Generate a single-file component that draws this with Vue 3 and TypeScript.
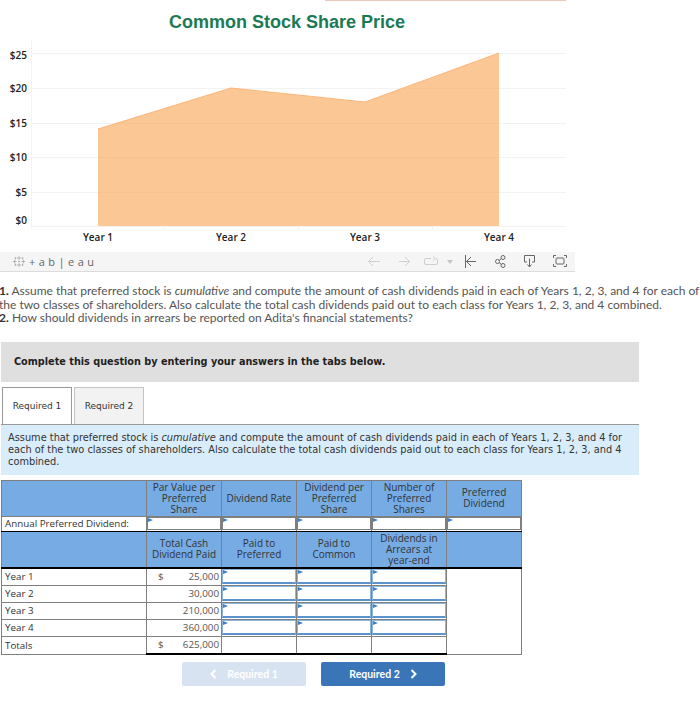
<script setup lang="ts">
const grid = [25, 20, 15, 10, 5, 0].map((v, i) => ({
  label: `$${v}`,
  y: [53, 88, 123, 157, 192, 226][i],
  labelY: [59, 92, 127, 161, 196, 224][i],
}))
const years = [
  { label: 'Year 1', x: 98 },
  { label: 'Year 2', x: 231 },
  { label: 'Year 3', x: 365 },
  { label: 'Year 4', x: 499 },
]
const rows = [
  { label: 'Year 1', sign: '$', amount: '25,000' },
  { label: 'Year 2', sign: '', amount: '30,000' },
  { label: 'Year 3', sign: '', amount: '210,000' },
  { label: 'Year 4', sign: '', amount: '360,000' },
]
</script>

<template>
  <div class="page">
    <div class="topline"></div>
    <h1 class="title">Common Stock Share Price</h1>

    <svg class="chart" width="566" height="206" viewBox="0 40 566 206">
      <line x1="31.5" y1="40" x2="31.5" y2="229" stroke="#f3f3f3" />
      <line v-for="g in grid" :key="g.y" x1="31" :y1="g.y + 0.5" x2="566" :y2="g.y + 0.5" stroke="#f3f3f3" />
      <line x1="164.5" y1="226" x2="164.5" y2="229" stroke="#f0f0f0" />
      <line x1="298.5" y1="226" x2="298.5" y2="229" stroke="#f0f0f0" />
      <line x1="432.5" y1="226" x2="432.5" y2="229" stroke="#f0f0f0" />
      <polygon points="98,129 231,88 365,102 499,53 499,226 98,226" fill="#f9a24e" fill-opacity="0.6" />
      <polyline points="98,129 231,88 365,102 499,53" fill="none" stroke="#fbb67a" stroke-width="1" />
      <text v-for="g in grid" :key="g.label" x="27" :y="g.labelY" text-anchor="end" class="tick">{{ g.label }}</text>
      <text v-for="y in years" :key="y.label" :x="y.x" y="241" text-anchor="middle" class="tick">{{ y.label }}</text>
    </svg>

    <div class="toolbar">
      <div class="brand">
        <svg width="14" height="13" viewBox="0 0 16 14" fill="none" stroke="#aaa" stroke-width="1">
          <path d="M8 1v4M6 3h4M8 9v4M6 11h4M3 5v4M1 7h4M13 5v4M11 7h4M4 2v2.500M3 3h2M12 2v2.500M11 3h2M4 9.500V12M3 11h2M12 9.500V12M11 11h2M8 6v2M7 7h2" />
        </svg>
        <span class="brand-text">+ a b | e a u</span>
      </div>
      <svg class="tools" width="210" height="19" viewBox="360 252 210 19" fill="none" stroke-width="1">
        <g stroke="#cfcfcf">
          <path d="M380 261.500h-11M373 257l-4.500 4.500 4.500 4.500" />
          <path d="M399 261.500h10M405 257l4.500 4.500-4.500 4.500" />
          <path d="M431 258.500h-5a1.500 1.500 0 0 0-1.500 1.500v3a1.500 1.500 0 0 0 1.500 1.500h10a1.500 1.500 0 0 0 1.500-1.500v-3a1.500 1.500 0 0 0-1.500-1.500M433 256.500l2.500 2-2.500 2" />
        </g>
        <path d="M447 260h6l-3 4z" fill="#c4c4c4" />
        <g stroke="#666">
          <path d="M465.500 255v13M476 261.500h-9.500M471 257l-4.500 4.500 4.500 4.500" />
          <circle cx="497.500" cy="261.500" r="2" />
          <circle cx="503" cy="257.500" r="2" />
          <circle cx="503" cy="265.500" r="2" />
          <path d="M499.200 260.300l2.200-1.600M499.200 262.700l2.200 1.600" />
          <path d="M527 262h-2.500v-6.500h10v6.500H532M529.500 258.500v8M527.500 264.500l2 2.500 2-2.500" />
          <path d="M553.500 258v-2.500h2.500M564 255.500h2.500v2.500M566.500 264v2.500H564M556 266.500h-2.500V264" />
          <rect x="556" y="258" width="8" height="6" rx="1" />
        </g>
      </svg>
    </div>

    <div class="question">
      <p><b>1.</b> Assume that preferred stock is <i>cumulative</i> and compute the amount of cash dividends paid in each of Years 1, 2, 3, and 4 for each of<br />the two classes of shareholders. Also calculate the total cash dividends paid out to each class for Years 1, 2, 3, and 4 combined.</p>
      <p><b>2.</b> How should dividends in arrears be reported on Adita's financial statements?</p>
    </div>

    <div class="notice">Complete this question by entering your answers in the tabs below.</div>

    <div class="tabs">
      <div class="tab active">Required 1</div>
      <div class="tab">Required 2</div>
    </div>

    <div class="prompt">
      Assume that preferred stock is <i>cumulative</i> and compute the amount of cash dividends paid in each of Years 1, 2, 3, and 4 for each of the two classes of shareholders. Also calculate the total cash dividends paid out to each class for Years 1, 2, 3, and 4 combined.
    </div>

    <table class="sheet">
      <colgroup>
        <col class="c0" /><col class="cn" /><col class="cn" /><col class="cn" /><col class="cn" /><col class="cn" />
      </colgroup>
      <tbody>
        <tr class="head first">
          <th></th>
          <th>Par Value per Preferred Share</th>
          <th>Dividend Rate</th>
          <th>Dividend per Preferred Share</th>
          <th>Number of Preferred Shares</th>
          <th>Preferred Dividend</th>
        </tr>
        <tr class="annual">
          <td class="label">Annual Preferred Dividend:</td>
          <td v-for="n in 5" :key="n" class="entry"><input type="text" aria-label="entry" /></td>
        </tr>
        <tr class="head second">
          <th></th>
          <th>Total Cash Dividend Paid</th>
          <th>Paid to Preferred</th>
          <th>Paid to Common</th>
          <th>Dividends in Arrears at year-end</th>
          <th></th>
        </tr>
        <tr v-for="(r, i) in rows" :key="r.label" class="year">
          <td class="label">{{ r.label }}</td>
          <td class="amount"><div><span>{{ r.sign }}</span><span>{{ r.amount }}</span></div></td>
          <td v-for="n in 3" :key="n" class="entry blue"><input type="text" aria-label="entry" /></td>
          <td v-if="i === 0" rowspan="5" class="blank"></td>
        </tr>
        <tr class="year totals">
          <td class="label">Totals</td>
          <td class="amount"><div><span>$</span><span>625,000</span></div></td>
          <td></td>
          <td></td>
          <td></td>
        </tr>
      </tbody>
    </table>

    <div class="nav">
      <button class="btn off" type="button">
        <svg width="7" height="10" viewBox="0 0 7 10" fill="none" stroke="#fff" stroke-width="2"><path d="M5.500 1L1.500 5l4 4" /></svg>
        <span>Required 1</span>
      </button>
      <button class="btn on" type="button">
        <span>Required 2</span>
        <svg width="7" height="10" viewBox="0 0 7 10" fill="none" stroke="#fff" stroke-width="2"><path d="M1.500 1l4 4-4 4" /></svg>
      </button>
    </div>
  </div>
</template>

<style scoped>
.page {
  width: 700px;
  height: 718px;
  overflow: hidden;
  background: #fff;
  font-family: "Lato", "Liberation Sans", sans-serif;
}
.topline {
  width: 241px;
  height: 1px;
  margin-left: 325px;
  background: #e9c9bd;
}
.title {
  margin: 0;
  width: 574px;
  height: 39px;
  padding-top: 11px;
  box-sizing: border-box;
  text-align: center;
  font: bold 18px/21px "Liberation Sans", sans-serif;
  color: #1a7a55;
}
.chart {
  display: block;
  margin-bottom: 6px;
}
.tick {
  font: 600 10px "Open Sans", sans-serif;
  fill: #222;
}
.toolbar {
  display: flex;
  align-items: center;
  justify-content: space-between;
  width: 575px;
  height: 20px;
  box-sizing: border-box;
  padding: 0 5px 0 12px;
  background: #f5f5f5;
  border-bottom: 1px solid #dcdcdc;
}
.brand {
  display: flex;
  align-items: center;
  gap: 3px;
}
.brand-text {
  font: 11px "Open Sans", sans-serif;
  letter-spacing: 0.300px;
  color: #666;
}
.tools {
  display: block;
}
.question {
  margin: 12px 0 0 -1px;
  width: 720px;
  font-size: 12px;
  line-height: 13.500px;
  color: #555;
}
.question p {
  margin: 0;
}
.question b {
  color: #333;
}
.notice {
  margin: 17px 0 0 1px;
  width: 638px;
  height: 40px;
  box-sizing: border-box;
  padding: 0 13px;
  display: flex;
  align-items: center;
  background: #dfdfdf;
  font: bold 9.700px "DejaVu Sans", sans-serif;
  color: #222;
}
.tabs {
  display: flex;
  gap: 2px;
  margin: 5px 0 0 2px;
  height: 37px;
}
.tab {
  width: 70px;
  box-sizing: border-box;
  border: 1px solid #c4c4c4;
  border-bottom: none;
  background: #f2f2f2;
  display: flex;
  align-items: center;
  justify-content: center;
  font: 9px "DejaVu Sans", sans-serif;
  color: #333;
}
.tab.active {
  background: #fff;
  border-color: #999;
}
.prompt {
  margin-left: 1px;
  width: 638px;
  height: 51px;
  box-sizing: border-box;
  padding: 7px 7px 0;
  background: #d9ecfa;
  border-top: 1px solid #999;
  font: 9.800px/12.300px "DejaVu Sans", sans-serif;
  color: #333;
}
.sheet {
  margin: 5px 0 0 1px;
  width: 520px;
  table-layout: fixed;
  border-collapse: collapse;
  font: 10px/11px "Open Sans", sans-serif;
  color: #333;
}
.c0 { width: 145px; }
.cn { width: 75px; }
.sheet th,
.sheet td {
  border: 1px solid #7f7f7f;
  padding: 0;
  box-sizing: border-box;
  overflow: hidden;
  white-space: nowrap;
}
.sheet th {
  background: #76abe3;
  font-weight: 400;
  text-align: center;
  padding: 0 4px;
  height: 37px;
  white-space: normal;
}
.sheet .first th { height: 36px; }
.annual td { height: 15px; }
.annual td, .head.second th { border-bottom-color: #000; }
.head.second th { border-top-color: #000; border-bottom-width: 2px; }
.year td { height: 17px; }
.year.totals td { height: 18px; }
.sheet td.label {
  padding-left: 3px;
  font-size: 9.800px;
  line-height: 11px;
}
.entry {
  position: relative;
}
.entry::before {
  content: "";
  position: absolute;
  left: 1px;
  top: 1px;
  border-left: 5px solid #3e7fc1;
  border-top: 2px solid transparent;
  border-bottom: 2px solid transparent;
}
.entry input {
  display: block;
  width: 100%;
  height: 13px;
  margin: 0;
  padding: 0;
  box-sizing: border-box;
  background: #fff;
  border: 1px solid #7f7f7f;
  outline: none;
}
.entry.blue input {
  height: 15px;
  border: 1px solid #8fb6dd;
  border-bottom: 2px solid #5b93cc;
}
.amount {
  font-size: 9.800px;
  line-height: 11px;
  color: #555;
}
.amount div {
  display: flex;
  justify-content: space-between;
  padding: 0 2px 0 11px;
}
.totals td:not(.label) {
  border-bottom: 2px solid #000;
}
.sheet td.blank {
  background: #fff;
  border-top-color: #000;
}
.nav {
  display: flex;
  gap: 15px;
  margin: 7px 0 0 182px;
}
.btn {
  display: flex;
  align-items: center;
  justify-content: center;
  gap: 10px;
  width: 124px;
  height: 24px;
  padding: 0;
  border: none;
  border-radius: 2px;
  font: bold 10.500px "Lato", sans-serif;
  color: #fff;
}
.btn.off { background: #d8e3f1; }
.btn.on { background: #3a75b8; }
</style>
